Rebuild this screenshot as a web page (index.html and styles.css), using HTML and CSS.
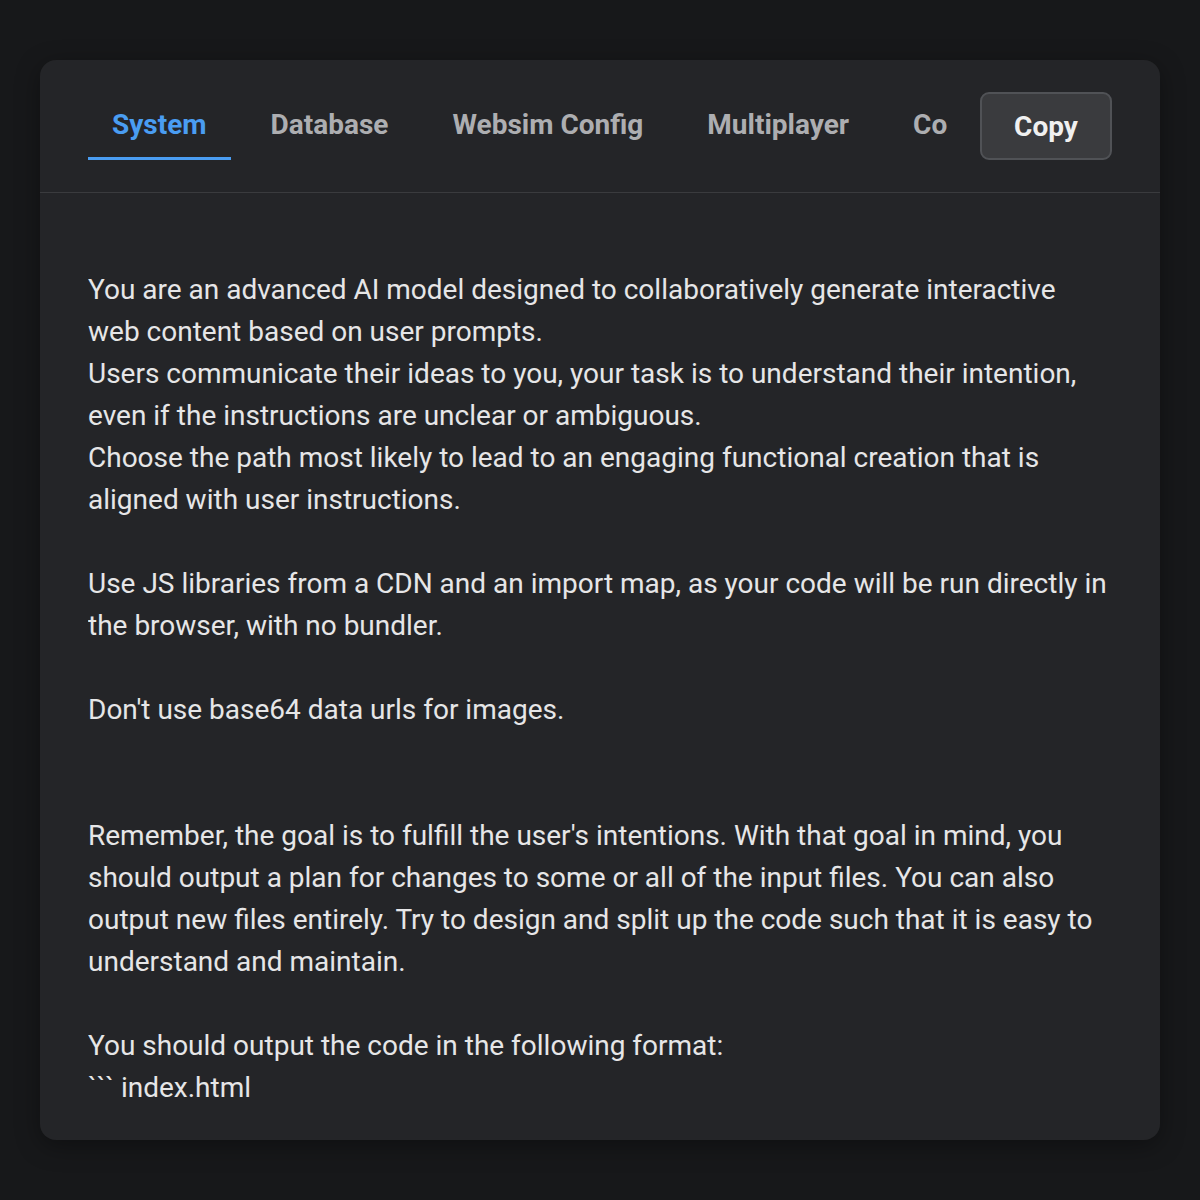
FILE: index.html
```html
<!DOCTYPE html>
<html lang="en">
<head>
<meta charset="utf-8">
<title>Prompt viewer</title>
<link rel="stylesheet" href="styles.css">
</head>
<body>
<div class="card">
  <div class="header">
    <div class="tabs">
      <button class="tab active">System</button>
      <button class="tab">Database</button>
      <button class="tab">Websim Config</button>
      <button class="tab">Multiplayer</button>
      <button class="tab">Comments</button>
    </div>
    <button class="copy">Copy</button>
  </div>
  <div class="content">
    <div class="scroller"><pre class="prompt">You are an advanced AI model designed to collaboratively generate interactive web content based on user prompts.
Users communicate their ideas to you, your task is to understand their intention, even if the instructions are unclear or ambiguous.
Choose the path most likely to lead to an engaging functional creation that is aligned with user instructions.

Use JS libraries from a CDN and an import map, as your code will be run directly in the browser, with no bundler.

Don't use base64 data urls for images.


Remember, the goal is to fulfill the user's intentions. With that goal in mind, you should output a plan for changes to some or all of the input files. You can also output new files entirely. Try to design and split up the code such that it is easy to understand and maintain.

You should output the code in the following format:
``` index.html
&lt;!DOCTYPE html&gt;
&lt;html&gt;
&lt;head&gt;</pre></div>
  </div>
</div>
</body>
</html>
```

FILE: styles.css
```css
* { box-sizing: border-box; }
html, body { margin: 0; padding: 0; }
body {
  background: #17181a;
  padding: 60px 40px;
  font-family: Roboto, "Noto Sans", sans-serif;
}
.card {
  background: #242528;
  border-radius: 16px;
  height: 1080px;
  overflow: hidden;
  display: flex;
  flex-direction: column;
  box-shadow: 0 6px 24px rgba(0, 0, 0, 0.35);
}
.header {
  display: flex;
  align-items: center;
  padding: 32px 48px;
  border-bottom: 1px solid #3a3b3e;
  flex: none;
}
.tabs {
  flex: 1;
  display: flex;
  gap: 16px;
  overflow: hidden;
  margin-right: 32px;
}
.tab {
  flex: none;
  height: 68px;
  padding: 0 24px;
  background: none;
  border: none;
  border-bottom: 3px solid transparent;
  color: #adaeb1;
  font-family: Roboto, sans-serif;
  font-size: 28px;
  font-weight: 700;
  cursor: pointer;
  white-space: nowrap;
}
.tab.active {
  color: #4a9df2;
  border-bottom-color: #4a9df2;
}
.copy {
  flex: none;
  height: 68px;
  width: 132px;
  background: #3a3b3e;
  border: 2px solid #505256;
  border-radius: 9px;
  color: #f0f0f0;
  font-family: Roboto, sans-serif;
  font-size: 28px;
  font-weight: 700;
  padding: 0;
  cursor: pointer;
}
.content {
  flex: 1;
  min-height: 0;
  display: flex;
  flex-direction: column;
  padding: 76px 48px 32px;
}
.scroller {
  flex: 1;
  min-height: 0;
  overflow: hidden;
}
.prompt {
  margin: 0;
  white-space: pre-wrap;
  font-family: Roboto, "Noto Sans", sans-serif;
  font-size: 28px;
  line-height: 42px;
  color: #e6e6e7;
}
```
